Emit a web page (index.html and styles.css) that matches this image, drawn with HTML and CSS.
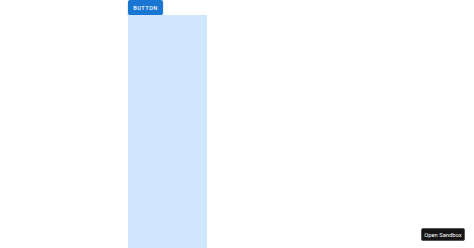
FILE: index.html
```html
<!DOCTYPE html>
<html>
<head>
<meta charset="utf-8">
<link rel="stylesheet" href="styles.css">
</head>
<body>
<div class="stack">
  <button class="btn">BUTTON</button>
  <div class="panel"></div>
</div>
<a class="sandbox">Open Sandbox</a>
</body>
</html>
```
FILE: styles.css
```css
html, body { margin: 0; padding: 0; height: 100%; background: #fff; }
body { font-family: Roboto, "Liberation Sans", sans-serif; }
.stack { display: flex; flex-direction: column; align-items: flex-start; margin-left: 128px; height: 248px; }
.btn {
  height: 15px; width: 35px; padding: 0; border: 0; border-radius: 2px;
  background: #1976d2; color: #fff; font-family: Roboto, sans-serif;
  font-size: 5.6px; font-weight: 500; letter-spacing: 0.45px;
  box-shadow: 0 1px 2px rgba(0,0,0,0.25);
}
.panel { width: 79px; flex: 1; background: #cfe6fc; }
.sandbox {
  position: fixed; right: 9px; bottom: 7px;
  width: 44px; height: 13px; box-sizing: border-box;
  display: flex; align-items: center; justify-content: center;
  background: #151515; color: #fff; border: 1px solid #555; border-radius: 2px;
  font-family: Roboto, sans-serif; font-size: 5.8px;
}
```
